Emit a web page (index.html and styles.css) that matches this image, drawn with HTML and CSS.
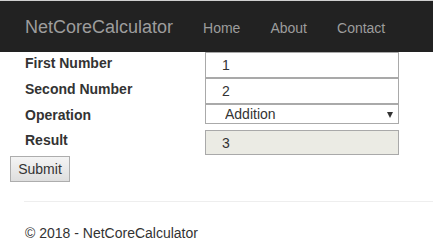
FILE: index.html
```html
<!DOCTYPE html>
<html lang="en">
<head>
    <meta charset="UTF-8">
    <meta name="viewport" content="width=device-width, initial-scale=1.0">
    <title>NetCoreCalculator</title>
    <link rel="stylesheet" href="styles.css">
</head>
<body>
    <nav class="navbar">
        <a class="brand" href="#">NetCoreCalculator</a>
        <a class="nav-link" href="#">Home</a>
        <a class="nav-link" href="#">About</a>
        <a class="nav-link" href="#">Contact</a>
    </nav>

    <form class="calc-form">
        <div class="calc-grid">
            <label class="field-label" for="first">First Number</label>
            <input class="field" id="first" type="text" value="1">

            <label class="field-label" for="second">Second Number</label>
            <input class="field" id="second" type="text" value="2">

            <label class="field-label" for="operation">Operation</label>
            <div class="select-wrap">
                <select class="field select" id="operation">
                    <option>Addition</option>
                    <option>Subtraction</option>
                    <option>Multiplication</option>
                    <option>Division</option>
                </select>
            </div>

            <label class="field-label result-label" for="result">Result</label>
            <input class="field result" id="result" type="text" value="3" readonly>
        </div>
        <button class="submit-btn" type="submit">Submit</button>
    </form>

    <footer>
        <hr>
        <p>&copy; 2018 - NetCoreCalculator</p>
    </footer>
</body>
</html>
```

FILE: styles.css
```css
body {
    margin: 0;
    font-family: 'Liberation Sans', Arial, sans-serif;
    font-size: 14px;
    line-height: 20px;
    color: #333;
    background-color: #fff;
}

.navbar {
    display: flex;
    align-items: center;
    height: 51px;
    padding-left: 25px;
    background-color: #222;
    border-top: 1px solid #cfcfcf;
}

.brand {
    font-size: 18px;
    color: #9d9d9d;
    text-decoration: none;
    padding-right: 15px;
}

.nav-link {
    color: #9d9d9d;
    text-decoration: none;
    padding: 2px 15px 0 15px;
}

.calc-form {
    padding-left: 10px;
}

.calc-grid {
    display: grid;
    grid-template-columns: 180px 194px;
    grid-template-rows: 26px 26px 20px 31px;
    padding-left: 15px;
}

.field-label {
    font-weight: bold;
    padding-top: 1px;
}

.result-label {
    padding-top: 6px;
}

.field {
    box-sizing: border-box;
    width: 100%;
    height: 100%;
    margin: 0;
    padding: 0 0 0 16px;
    border: 1px solid #a9a9a9;
    font-family: inherit;
    font-size: 14px;
    color: #333;
    background-color: #fff;
    outline: none;
}

.select-wrap {
    position: relative;
}

.select {
    -webkit-appearance: none;
    appearance: none;
    border-radius: 0;
    padding-left: 19px;
    border-color: #aaa;
}

.select-wrap::after {
    content: "";
    position: absolute;
    right: 6px;
    top: 8px;
    border-left: 3.5px solid transparent;
    border-right: 3.5px solid transparent;
    border-top: 6px solid #333;
    pointer-events: none;
}

.result {
    height: 25px;
    margin-top: 6px;
    background-color: #ebebe4;
}

.submit-btn {
    margin-top: 1px;
    width: 60px;
    height: 26px;
    padding: 0;
    font-family: inherit;
    font-size: 14px;
    color: #333;
    border: 1px solid #adadad;
    border-radius: 0;
    background: linear-gradient(#f4f4f4, #dedede);
}

footer {
    padding-left: 24px;
}

footer hr {
    margin: 19px 0 0 0;
    border: 0;
    border-top: 1px solid #eee;
}

footer p {
    margin: 21px 0 0 1px;
}
```
